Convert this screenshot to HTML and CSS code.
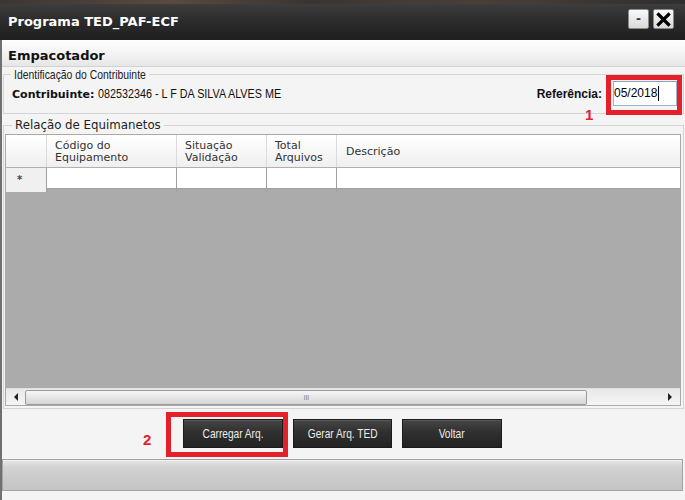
FILE: index.html
```html
<!DOCTYPE html>
<html lang="pt-BR">
<head>
<meta charset="utf-8">
<title>Programa TED_PAF-ECF</title>
<link rel="stylesheet" href="styles.css">
</head>
<body>
<div class="desk"></div>
<div class="titlebar">
  <span class="title">Programa TED_PAF-ECF</span>
  <div class="winbtns">
    <span class="wbtn min">-</span>
    <span class="wbtn close"><svg width="15" height="15" viewBox="0 0 15 15"><path d="M2.5 2.5 L12.5 12.5 M12.5 2.5 L2.5 12.5" stroke="#000" stroke-width="3.2" stroke-linecap="square"/></svg></span>
  </div>
</div>
<div class="window">
  <div class="header">Empacotador</div>
  <fieldset class="group g1">
    <legend><span class="narrow legend-text">Identificação do Contribuinte</span></legend>
    <div class="contrib-row">
      <div class="contrib"><b>Contribuinte:</b> <span class="narrow contrib-text">082532346 - L F DA SILVA ALVES ME</span></div>
      <span class="ref">Referência:</span>
      <div class="input">05/2018<span class="caret"></span></div>
    </div>
  </fieldset>
  <fieldset class="group g2">
    <legend class="verd">Relação de Equimanetos</legend>
    <div class="grid">
      <div class="ghead">
        <div class="hc"></div>
        <div class="hc">Código do<br>Equipamento</div>
        <div class="hc">Situação<br>Validação</div>
        <div class="hc">Total<br>Arquivos</div>
        <div class="hc last">Descrição</div>
      </div>
      <div class="grow">
        <div class="rc rh">*</div>
        <div class="rc"></div>
        <div class="rc"></div>
        <div class="rc"></div>
        <div class="rc last"></div>
      </div>
      <div class="gempty"></div>
      <div class="hscroll">
        <span class="arrow left"></span>
        <div class="thumb"><span class="grip">III</span></div>
        <span class="spacer"></span>
        <span class="arrow right"></span>
      </div>
    </div>
  </fieldset>
  <div class="actions">
    <button class="btn"><span class="btn-text">Carregar Arq.</span></button>
    <button class="btn w99"><span class="btn-text">Gerar Arq. TED</span></button>
    <button class="btn"><span class="btn-text">Voltar</span></button>
  </div>
  <div class="status"></div>
</div>
<div class="mark mark1"></div>
<div class="num num1">1</div>
<div class="mark mark2"></div>
<div class="num num2">2</div>
</body>
</html>
```
FILE: styles.css
```css
* { box-sizing: border-box; }
html, body { margin: 0; padding: 0; }
body {
  width: 685px;
  height: 500px;
  overflow: hidden;
  position: relative;
  background: #f4f4f4;
  font-family: "Liberation Sans", Arial, sans-serif;
  color: #000;
}
.narrow {
  display: inline-block;
  transform: scaleX(0.8);
  transform-origin: left center;
}
.verd { font-family: "DejaVu Sans", Verdana, sans-serif; }

.desk {
  height: 4px;
  background: linear-gradient(to right, #3b3633, #5a4a3f 25%, #3a3532 45%, #4b4038 70%, #2f2f2f);
}
.titlebar {
  height: 36px;
  display: flex;
  justify-content: space-between;
  align-items: flex-start;
  padding: 0 11px 0 8px;
  background: linear-gradient(#3d3d3d, #2c2c2c 45%, #1f1f1f);
}
.title {
  margin-top: 10px;
  line-height: 16px;
  font-family: "DejaVu Sans", Verdana, sans-serif;
  font-weight: bold;
  font-size: 13px;
  color: #fff;
}
.winbtns {
  display: flex;
  gap: 4px;
  margin-top: 5px;
}
.wbtn {
  width: 21px;
  height: 20px;
  border: 1px solid #8a8a8a;
  border-radius: 2px;
  background: linear-gradient(#fafafa, #d9d9d9);
  display: flex;
  align-items: center;
  justify-content: center;
  font-family: "DejaVu Sans", sans-serif;
  font-size: 12px;
  font-weight: bold;
  color: #333;
}
.window {
  height: 460px;
  border-left: 2px solid #707070;
  background: #f4f4f4;
}
.header {
  height: 27px;
  padding: 6px 0 0 6px;
  border-top: 1px solid #fff;
  border-bottom: 1px solid #d2d2d2;
  background: linear-gradient(#fdfdfd, #f1f1f1 60%, #e6e6e6);
  font-family: "DejaVu Sans", Verdana, sans-serif;
  font-weight: bold;
  font-size: 13px;
  line-height: 18px;
  color: #111;
}
.group {
  margin: 0 1px;
  border: 1px solid #d4d4d4;
  min-width: 0;
}
.group legend {
  line-height: 15px;
  padding: 0 3px;
  margin-left: 7px;
  color: #222;
}
.g1 {
  padding: 0 6px 7px 8px;
}
.g1 legend {
  font-size: 13px;
  margin-left: -1px;
}
.legend-text { margin-right: -33px; }
.contrib-row {
  display: flex;
  align-items: center;
  height: 25px;
  margin-top: -1px;
}
.contrib {
  flex: 1;
  font-size: 13px;
  color: #111;
  white-space: nowrap;
}
.contrib-text { transform: scaleX(0.83); }
.contrib b {
  font-family: "DejaVu Sans", Verdana, sans-serif;
  font-size: 11px;
}
.ref {
  font-weight: bold;
  font-size: 12px;
  color: #111;
  margin-right: 11px;
}
.input {
  width: 64px;
  height: 25px;
  border: 1px solid #9fb4cc;
  border-top-color: #8aa2bf;
  background: #fff;
  font-size: 12px;
  line-height: 23px;
  padding-left: 0;
  display: flex;
  align-items: center;
}
.caret {
  display: inline-block;
  width: 1px;
  height: 15px;
  background: #000;
  margin-left: 1px;
}
.g2 {
  margin-top: 4px;
  padding: 1px 2px 2px 1px;
}
.g2 legend { font-size: 11.8px; }
.grid {
  border: 1px solid #a9a9a9;
  font-family: "DejaVu Sans", Verdana, sans-serif;
  font-size: 11px;
  color: #333;
}
.ghead, .grow {
  display: grid;
  grid-template-columns: 41px 130px 90px 70px 1fr;
}
.ghead {
  height: 33px;
  border-bottom: 1px solid #b0b0b0;
  background: linear-gradient(#ffffff, #f7f7f7 50%, #efefef);
}
.hc {
  display: flex;
  align-items: center;
  padding: 1px 0 0 8px;
  line-height: 12px;
  border-right: 1px solid #dadada;
}
.hc.last { border-right: 0; padding-left: 9px; }
.grow {
  height: 21px;
  border-bottom: 1px solid #a0a0a0;
  background: #fff;
}
.rc { border-right: 1px solid #a0a0a0; }
.rc.last { border-right: 0; }
.rh {
  background: #f0f0f0;
  padding-left: 11px;
  font-size: 10px;
  font-weight: bold;
  line-height: 24px;
  color: #444;
}
.gempty {
  height: 199px;
  background: #ababab;
}
.hscroll {
  height: 17px;
  display: flex;
  align-items: center;
  background: linear-gradient(#e9e9e9, #f4f4f4);
  border-top: 1px solid #e0e0e0;
}
.arrow {
  width: 0;
  height: 0;
  border-top: 4px solid transparent;
  border-bottom: 4px solid transparent;
}
.arrow.left {
  border-right: 4px solid #222;
  margin: 0 7px 0 8px;
}
.arrow.right {
  border-left: 4px solid #222;
  margin: 0 8px 0 0;
}
.thumb {
  width: 562px;
  height: 15px;
  border: 1px solid #9a9a9a;
  border-radius: 2px;
  background: linear-gradient(#f6f6f6, #e6e6e6 50%, #d6d6d6);
  display: flex;
  align-items: center;
  justify-content: center;
}
.grip {
  font-family: "Liberation Sans", sans-serif;
  font-size: 8px;
  color: #777;
  transform: scaleX(0.8);
}
.spacer { flex: 1; }
.actions {
  display: flex;
  justify-content: center;
  gap: 10px;
  margin-top: 10px;
  padding-right: 2px;
}
.btn {
  width: 100px;
  height: 29px;
  border: 1px solid #1b1b1b;
  background: linear-gradient(#464646, #303030 45%, #232323);
  box-shadow: inset 0 1px 0 #5a5a5a;
  color: #ececec;
  font-family: "Liberation Sans", Arial, sans-serif;
  font-size: 13px;
  padding: 0;
}
.btn-text {
  display: inline-block;
  transform: scaleX(0.78);
}
.btn.w99 { width: 99px; }
.status {
  margin: 11px 0 0 0;
  width: 681px;
  height: 32px;
  border: 1px solid #a2a2a2;
  background: linear-gradient(#e6e6e6, #d2d2d2 25%, #c9c9c9 70%, #c4c4c4);
  box-shadow: inset 0 1px 0 #f2f2f2;
}
.mark {
  position: absolute;
  border: 5px solid #e4202a;
}
.mark1 { left: 606px; top: 75px; width: 76px; height: 40px; }
.mark2 { left: 166px; top: 412px; width: 122px; height: 45px; }
.num {
  position: absolute;
  font-family: "Liberation Sans", Arial, sans-serif;
  font-weight: bold;
  font-size: 15px;
  line-height: 15px;
  color: #e4202a;
}
.num1 { left: 585px; top: 107px; }
.num2 { left: 143px; top: 432px; }
```
